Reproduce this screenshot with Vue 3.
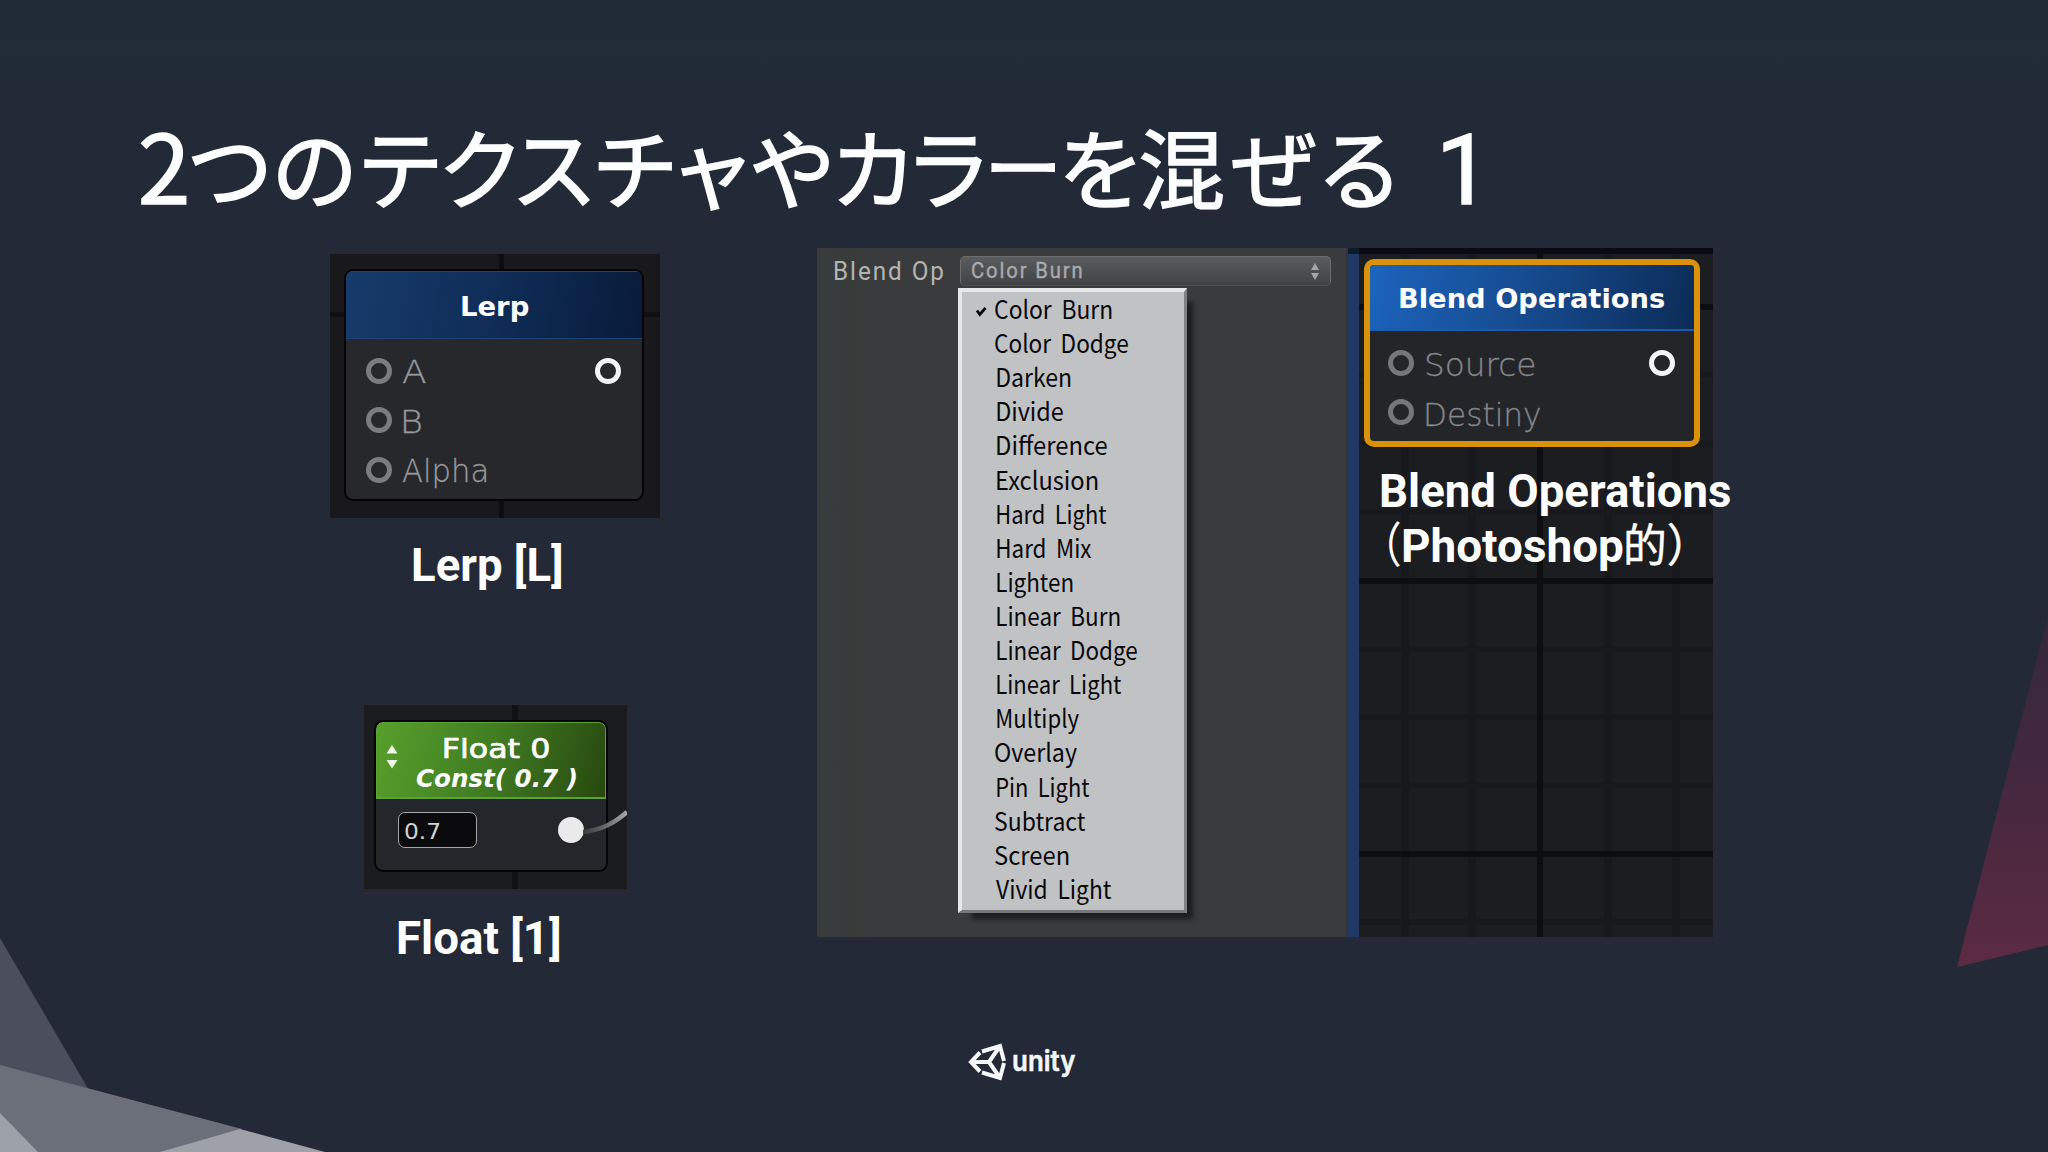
<script setup>
import { h } from 'vue'

const ctx = document.createElement('canvas').getContext('2d')
const JP = '"Noto Sans CJK JP", sans-serif'
const UI = '"DejaVu Sans", sans-serif'
const CAP = 'Roboto, "Noto Sans CJK JP", sans-serif'

function measure(text, font, spacing = 0, word = 0) {
  ctx.font = font
  ctx.letterSpacing = spacing + 'px'
  ctx.wordSpacing = word + 'px'
  const m = ctx.measureText(text)
  return { bearing: -m.actualBoundingBoxLeft, ink: m.actualBoundingBoxRight + m.actualBoundingBoxLeft }
}

// One line of text whose visible ink is exactly `w` wide, sitting on baseline `base`.
function Line(p) {
  const size = Number(p.size)
  const weight = p.weight || 400
  const family = p.family || UI
  const slant = p.slant || 'normal'
  const sp = Number(p.spacing || 0)
  const ws = Number(p.word || 0)
  const m = measure(p.text, `${slant} ${weight} ${size}px ${family}`, sp, ws)
  const s = Number(p.w) / m.ink
  return h('svg', { class: 'line', width: p.w, height: p.h, style: 'display:block;overflow:visible;flex:none' }, [
    h('text', {
      transform: `translate(${-m.bearing * s} ${p.base}) scale(${s} 1)`,
      fill: p.color || '#fff',
      stroke: p.bold ? (p.color || '#fff') : 'none',
      'stroke-width': p.bold || 0,
      'font-family': family,
      'font-size': size,
      'font-weight': weight,
      'font-style': slant,
      'letter-spacing': sp,
      'word-spacing': ws
    }, p.text)
  ])
}
Line.props = ['text', 'w', 'h', 'base', 'size', 'weight', 'family', 'slant', 'spacing', 'word', 'color', 'bold']

// Title glyphs with their left ink edges; digits and the long vowel mark have their own size.
const lefts = [140, 191.5, 277.5, 364, 444.5, 518, 598, 681, 753, 838.4, 916, 990.5, 1065, 1140.5, 1232, 1324.5, 1443]
const special = {
  '2': { size: 95, family: JP, y: 204 },
  'ー': { size: 78, family: JP, y: 198 },
  '1': { size: 99, family: 'Roboto, sans-serif', y: 204 }
}
const title = [...'2つのテクスチャやカラーを混ぜる1'].map((c, i) => {
  const g = special[c] || { size: 87, family: JP, y: 202.5 }
  return { c, ...g, x: lefts[i] - measure(c, `400 ${g.size}px ${g.family}`).bearing + 0.7 }
})

const modes = [
  ['Color Burn', 117, 0], ['Color Dodge', 133, 0], ['Darken', 74, 2], ['Divide', 66, 2],
  ['Difference', 110, 2], ['Exclusion', 101, 2], ['Hard Light', 110, 2], ['Hard Mix', 95, 2],
  ['Lighten', 76, 2], ['Linear Burn', 123, 2], ['Linear Dodge', 140, 2], ['Linear Light', 125, 2],
  ['Multiply', 82, 2], ['Overlay', 82, 0], ['Pin Light', 93, 2], ['Subtract', 91, 0],
  ['Screen', 74, 0], ['Vivid Light', 116, 1]
]
</script>

<template>
  <div class="slide">
    <svg class="backdrop" viewBox="0 0 2048 1152">
      <defs>
        <linearGradient id="rose" x1="0" y1="0" x2="0" y2="1">
          <stop offset="0" stop-color="#35283a" />
          <stop offset=".45" stop-color="#44283f" />
          <stop offset="1" stop-color="#5c2b43" />
        </linearGradient>
      </defs>
      <polygon points="0,938 0,1070 90,1092" fill="#4b4f5d" />
      <polygon points="0,1065 87,1088 242,1129 162,1152 0,1152" fill="#6b6f79" />
      <polygon points="0,1113 38,1152 0,1152" fill="#9da2a9" />
      <polygon points="240,1129 325,1152 160,1152" fill="#9fa1a9" />
      <polygon points="2048,616 1957,967 2048,945" fill="url(#rose)" />
    </svg>

    <header class="heading">
      <svg width="2048" height="248">
        <text class="title"><tspan v-for="(g, i) in title" :key="i" :x="g.x" :y="g.y" :font-size="g.size" :font-family="g.family">{{ g.c }}</tspan></text>
      </svg>
    </header>

    <main class="stage">
      <section class="nodes">
        <div class="shot lerp-shot">
          <div class="node lerp">
            <div class="node-head blue-dark">
              <Line text="Lerp" w="67" h="68" base="43.500" size="27" weight="700" />
            </div>
            <div class="node-body">
              <ul class="ports">
                <li><i class="socket" /><Line text="A" w="24" h="49" base="37" size="31.5" weight="200" color="#98999b" bold=".3" /></li>
                <li><i class="socket" /><Line class="in" text="B" w="18" h="49" base="37" size="31.5" weight="200" color="#98999b" bold=".3" /></li>
                <li><i class="socket" /><Line text="Alpha" w="84" h="49" base="37" size="31.5" weight="200" color="#98999b" bold=".3" /></li>
              </ul>
              <i class="socket out" />
            </div>
          </div>
        </div>
        <Line class="cap-lerp" text="Lerp [L]" w="148" h="80" base="62.500" size="46" weight="700" :family="CAP" />

        <div class="shot float-shot">
          <div class="node float">
            <div class="node-head green">
              <svg class="updown" width="12" height="24" viewBox="0 0 12 24">
                <path d="M6 0 11.5 8.5H.5ZM6 23.500 .5 15H11.500Z" fill="#eef6e6" />
              </svg>
              <div class="float-names">
                <Line class="float-title" text="Float 0" w="105" h="38" base="34.500" size="27" bold=".7" />
                <Line text="Const( 0.7 )" w="160" h="38" base="25.500" size="24" weight="700" slant="italic" />
              </div>
            </div>
            <div class="float-body">
              <div class="field"><Line text="0.7" w="35" h="34" base="26" size="22" color="#d0d0d2" /></div>
              <i class="dot" />
            </div>
          </div>
          <svg class="wire" width="44" height="30" viewBox="0 0 44 30">
            <defs>
              <linearGradient id="wire"><stop offset="0" stop-color="#3c3c40" /><stop offset=".5" stop-color="#68686b" /><stop offset="1" stop-color="#a8a8aa" /></linearGradient>
            </defs>
            <path d="M0 27C18 25 30 19 44 7" stroke="url(#wire)" stroke-width="4.500" fill="none" />
          </svg>
        </div>
        <Line class="cap-float" text="Float [1]" w="161" h="80" base="64.500" size="46" weight="700" :family="CAP" />
      </section>

      <section class="board">
        <div class="inspector">
          <div class="prop">
            <Line text="Blend Op" w="108" h="30" base="24" size="25" family="Roboto, sans-serif" spacing="2" color="#b3b4b4" />
            <div class="select">
              <Line text="Color Burn" w="110" h="28" base="20.500" size="21.500" family="Roboto, sans-serif" spacing="2" color="#a9aaac" bold=".4" />
              <svg width="10" height="17" viewBox="0 0 10 17"><path d="M5 0 9 7H1ZM5 17 1 10H9Z" fill="#a4a5a7" /></svg>
            </div>
          </div>
          <ul class="menu">
            <li v-for="([name, width, inset], i) in modes" :key="name">
              <span class="tick">
                <svg v-if="i === 0" width="11" height="11" viewBox="0 0 11 11"><path d="M1 4.500 3.800 8.500 9.500 2" fill="none" stroke="#050505" stroke-width="2.800" /></svg>
              </span>
              <Line :style="{ marginLeft: inset + 'px' }" :text="name" :w="width" h="34" base="27.300" size="25" word="5" :family="JP" color="#08080a" />
            </li>
          </ul>
        </div>
        <div class="divider" />
        <div class="graph">
          <svg class="grid" width="354" height="689">
            <g fill="#17191c">
              <rect v-for="x in [42, 109, 245, 313]" :key="x" :x="x" y="0" width="8" height="689" />
              <rect v-for="y in [124, 193, 261, 398, 466, 534, 671]" :key="y" x="0" :y="y" width="354" height="6" />
            </g>
            <g fill="#0d0e10">
              <rect x="178" y="0" width="6" height="689" />
              <rect v-for="y in [56, 330, 603]" :key="y" x="0" :y="y" width="354" height="6" />
            </g>
            <rect width="354" height="6" fill="#060c12" />
          </svg>
          <div class="node blend">
            <div class="node-head blue">
              <Line class="blend-title" text="Blend Operations" w="264.500" h="66" base="42.500" size="26.500" weight="700" />
            </div>
            <div class="node-body">
              <ul class="ports">
                <li><i class="socket" /><Line text="Source" w="108" h="49" base="37.500" size="31.500" weight="200" color="#85878c" bold=".3" /></li>
                <li><i class="socket" /><Line text="Destiny" w="114" h="49" base="37.500" size="31.500" weight="200" color="#85878c" bold=".3" /></li>
              </ul>
              <i class="socket out" />
            </div>
          </div>
          <div class="caption">
            <Line class="cap-blend" text="Blend Operations" w="349" h="55" base="49" size="46" weight="700" :family="CAP" />
            <div class="cap-row">
              <Line text="（" w="11" h="55" base="49" size="48" :family="JP" />
              <Line text="Photoshop" w="220" h="55" base="49" size="46" weight="700" :family="CAP" />
              <Line text="的）" w="54.500" h="55" base="49" size="45" :family="JP" bold=".5" />
            </div>
          </div>
        </div>
      </section>
    </main>

    <footer class="brand">
      <svg width="38" height="38" viewBox="0 0 38 38" fill="none" stroke="#f4f7fb" stroke-width="4">
        <path d="M14 8.500 32 3l4 15M36 20l-4 15-18-5.500M12 9.500 3 19l9 9.500M3 19H21M21 19 32 3M21 19 32 35" />
      </svg>
      <Line text="unity" w="62" h="40" base="27.500" size="28" weight="600" family="Inter, sans-serif" color="#f4f7fb" bold=".5" />
    </footer>
  </div>
</template>

<style>
body { margin: 0; background: #232a38; }
</style>

<style scoped>
.slide { position: relative; width: 2048px; height: 1152px; overflow: hidden; background: linear-gradient(#212b37, #232937 18%, #232937); }
.backdrop { position: absolute; inset: 0; width: 2048px; height: 1152px; }
.heading, .stage, .brand { position: relative; }
.heading { height: 248px; }
.heading svg { display: block; }
.title { font-weight: 400; fill: #fcfeff; stroke: #fcfeff; stroke-width: 1.4; }
.stage { display: flex; height: 689px; padding-left: 330px; }
ul { list-style: none; margin: 0; padding: 0; }

.nodes { width: 486.5px; padding-top: 6px; box-sizing: border-box; }
.shot { position: relative; box-sizing: border-box; }
.lerp-shot { width: 330px; height: 264px; padding: 15px 0 0 14px;
  background: linear-gradient(90deg, transparent 169px, #0e0e10 169px 174px, transparent 174px), linear-gradient(transparent 58px, #101012 58px 63px, transparent 63px), #19191b; }
.float-shot { width: 263.5px; height: 184px; margin: 107px 0 0 33.5px; padding: 15px 0 0 10px;
  background: linear-gradient(90deg, transparent 148px, #101113 148px 154px, transparent 154px), #1b1c1e; }
.cap-lerp { margin-left: 83px; }
.cap-float { margin-left: 68px; }

.node { box-sizing: border-box; overflow: hidden; background: #27282c; }
.lerp { width: 300px; height: 232px; border: 2.500px solid #050507; border-radius: 9px; }
.node-head { display: flex; justify-content: center; box-sizing: border-box; }
.blue-dark { height: 68px; padding-left: 2px; background: linear-gradient(100deg, #173b6b, #0f2d57 50%, #091b3a); border-bottom: 1px solid #1c4479; border-top: 1px solid #1c4479; }
.blue { height: 66px; padding-left: 2px; background: linear-gradient(100deg, #1c64bd, #164a8d 50%, #0c2c57); border-bottom: 2px solid #1a5cac; }
.node-body { display: flex; justify-content: space-between; }
.lerp .node-body { padding: 7px 21px 0 20px; }
.blend .node-body { padding: 7px 19px 0 18px; }
.ports li { display: flex; align-items: center; height: 49.500px; gap: 9.500px; }
.blend .ports li { gap: 12px; }
.in { margin-left: 1px; }
.socket { box-sizing: border-box; width: 26px; height: 26px; border: 5.500px solid #7b7c7e; border-radius: 50%; flex: none; }
.blend .socket { border-color: #75777b; }
.node .out { margin-top: 11.500px; border-color: #f3f4f6; }

.float { width: 234px; height: 152px; border: 2.500px solid #050507; border-radius: 9px; background: #25262b; }
.green { height: 77px; justify-content: flex-start; background: linear-gradient(105deg, #57a02b, #407c22 50%, #28480f); border: 1px solid #5ba335; border-width: 1px 1px 2px; border-radius: 7px 7px 0 0; }
.updown { margin: 22px 0 0 9px; flex: none; }
.float-names { display: flex; flex-direction: column; margin-left: 18px; }
.float-title { margin-left: 28px; }
.float-body { display: flex; align-items: center; justify-content: space-between; padding: 13px 22px 0 22px; }
.field { box-sizing: border-box; width: 79px; height: 36px; padding-left: 6px; border: 1.500px solid #a6a6a9; border-radius: 7px; background: #0b0b0e; }
.dot { width: 26px; height: 26px; border-radius: 50%; background: #ebeaeb; }
.wire { position: absolute; right: 0; top: 100px; }

.board { display: flex; width: 896.500px; }
.inspector { width: 531.500px; box-sizing: border-box; padding: 8px 0 0 18.500px; background: linear-gradient(90deg, #383c3b, #3a3b3c 60px); border-right: 2px solid #33343a; }
.prop { display: flex; gap: 16.500px; height: 30px; }
.select { display: flex; justify-content: space-between; align-items: center; box-sizing: border-box; width: 371px; height: 30px; padding: 0 10px 0 11px; border: 1.500px solid #6c6d6f; border-bottom-color: #505153; border-radius: 5px; background: linear-gradient(#5b5c5e, #414244); }
.menu { box-sizing: border-box; width: 229px; height: 625px; margin: 2px 0 0 122.500px; border: solid; border-width: 4px 3px 3px 4px; border-color: #e6e7e8 #808183 #77787a #e6e7e8; background: #c1c2c4; box-shadow: 10px 10px 5px -4px #1c1d1e; }
.menu li { display: flex; height: 34.120px; }
.tick { width: 33.500px; padding: 14px 0 0 14px; box-sizing: border-box; }
.tick svg { display: block; }
.divider { width: 11px; background: linear-gradient(#0c1c2c 6px, #203863 6px); flex: none; }
.graph { position: relative; width: 354px; padding: 11px 0 0 4.500px; box-sizing: border-box; background: #1b1d20; }
.grid { position: absolute; left: 0; top: 0; }
.blend { position: relative; width: 336px; height: 188px; border: 6px solid #db920b; border-radius: 10px; background: #242529; }
.caption { position: relative; padding-top: 11px; margin-left: 17.500px; }
.cap-row { display: flex; gap: 3px; padding-left: 8px; }

.brand { display: flex; align-items: flex-start; gap: 7px; margin: 106px 0 0 968px; }
</style>
